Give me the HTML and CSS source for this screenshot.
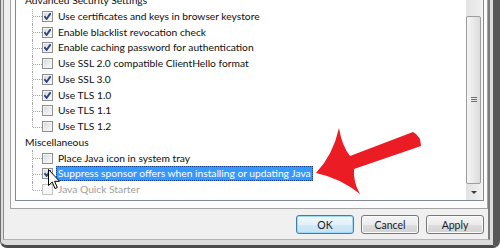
FILE: index.html
```html
<!DOCTYPE html>
<html>
<head>
<meta charset="utf-8">
<link rel="stylesheet" href="styles.css">
</head>
<body>
<div class="frame">
  <div class="dialog">
    <div class="tab">
      <div class="list">
        <div class="tree">
          <div class="row header"><span class="label">Advanced Security Settings</span></div>
          <div class="children">
            <div class="row item"><span class="cb on"></span><span class="label">Use certificates and keys in browser keystore</span></div>
            <div class="row item"><span class="cb on"></span><span class="label">Enable blacklist revocation check</span></div>
            <div class="row item"><span class="cb on"></span><span class="label">Enable caching password for authentication</span></div>
            <div class="row item"><span class="cb"></span><span class="label">Use SSL 2.0 compatible ClientHello format</span></div>
            <div class="row item"><span class="cb on"></span><span class="label">Use SSL 3.0</span></div>
            <div class="row item"><span class="cb on"></span><span class="label">Use TLS 1.0</span></div>
            <div class="row item"><span class="cb"></span><span class="label">Use TLS 1.1</span></div>
            <div class="row item"><span class="cb"></span><span class="label">Use TLS 1.2</span></div>
          </div>
          <div class="row header"><span class="label">Miscellaneous</span></div>
          <div class="children">
            <div class="row item"><span class="cb"></span><span class="label">Place Java icon in system tray</span></div>
            <div class="row item"><span class="cb on"></span><span class="label selected">Suppress sponsor offers when installing or updating Java</span></div>
            <div class="row item disabled"><span class="cb"></span><span class="label">Java Quick Starter</span></div>
          </div>
        </div>
        <div class="scrollbar">
          <div class="track-top"></div>
          <div class="thumb"><span class="grip"></span></div>
          <div class="arrow-down"><span class="tri"></span></div>
        </div>
      </div>
    </div>
    <div class="buttons">
      <button class="btn default">OK</button>
      <button class="btn">Cancel</button>
      <button class="btn">Apply</button>
    </div>
  </div>
  <svg class="cursor" width="13" height="21" viewBox="0 0 13 21">
    <path d="M0.5,0.5 L0.5,16.5 L4.2,13 L7,19.5 L9.3,18.5 L6.6,12.3 L11.5,12.3 Z" fill="#fff" stroke="#000" stroke-width="1" stroke-linejoin="miter"/>
  </svg>
  <svg class="red-arrow" width="500" height="248" viewBox="0 0 500 248">
    <path d="M316,173 Q333,155 339,128 Q342,146 350,156 L413,132 Q421,136 421,146 L354,169 Q353,182 360,194 Q340,178 316,173 Z" fill="#ec1c24"/>
  </svg>
</div>
</body>
</html>
```
FILE: styles.css
```css
* { box-sizing: border-box; }
html, body { margin: 0; padding: 0; background: #ffffff; }
body { font-family: Lato, "Noto Sans", sans-serif; font-size: 10.25px; color: #0e0e0e; }

.frame {
  position: relative;
  width: 500px;
  height: 248px;
  overflow: hidden;
  background: #dcdcdc;
  border-left: 1px solid #6e6e6e;
  border-right: 7px solid #575757;
  border-bottom: 3px solid #4c4c4c;
  border-radius: 0 0 7px 7px;
  padding: 0 3px 5px 2px;
}

.dialog {
  height: 240px;
  background: #f0f0f0;
  border-left: 1px solid #8c8c8c;
  border-right: 2px solid #7c7c7c;
  border-bottom: 1px solid #b4b4b4;
  padding-left: 6px;
  display: flex;
  flex-direction: column;
}

.tab {
  height: 209px;
  background: #fbfbfb;
  border: 1px solid #a3a3a3;
  border-top: none;
  padding: 0 3px 7px 4px;
}

.list {
  height: 201px;
  background: #ffffff;
  border: 1px solid #858992;
  border-top: none;
  display: flex;
  overflow: hidden;
}

.tree {
  flex: 1;
  margin-top: -7.2px;
}

.row {
  position: relative;
  height: 15.75px;
  display: flex;
  align-items: center;
  white-space: nowrap;
}
.header { padding-left: 9px; }
.header .label { padding: 0; margin-left: 0; }

.item { padding-left: 26px; }
.item::before {
  content: "";
  position: absolute;
  left: 16px;
  top: 0;
  bottom: 0;
  border-left: 1px dotted #a4a4a4;
}
.item:last-child::before { bottom: 50%; }
.item::after {
  content: "";
  position: absolute;
  left: 17px;
  width: 9px;
  top: 50%;
  border-top: 1px dotted #a4a4a4;
}

.cb {
  width: 11px;
  height: 11px;
  flex: none;
  border: 1px solid #8e8f8f;
  background: linear-gradient(135deg, #cfd3d9 0%, #e9eaec 50%, #fbfbfb 100%);
  box-shadow: inset 0 0 0 1px #f4f4f4;
  position: relative;
}
.cb.on {
  background-image: url("data:image/svg+xml;utf8,<svg xmlns='http://www.w3.org/2000/svg' width='9' height='9' viewBox='0 0 9 9'><path d='M1.4,4.2 L3.6,7 L7.7,1.1' fill='none' stroke='%232f4480' stroke-width='1.9'/></svg>"), linear-gradient(135deg, #cfd3d9 0%, #e9eaec 50%, #fbfbfb 100%);
  background-repeat: no-repeat;
  background-position: center;
}
.disabled .cb { border-color: #c6c6c6; background: #f6f6f6; box-shadow: none; }
.disabled .label { color: #9d9d9d; }

.label {
  margin-left: 3px;
  padding: 0 2px;
  line-height: 15px;
  height: 15px;
}
.label.selected {
  background: #3399ff;
  color: #ffffff;
  outline: 1px dotted #0f3d87;
  outline-offset: -1px;
}

.scrollbar {
  width: 17px;
  flex: none;
  display: flex;
  flex-direction: column;
  background: linear-gradient(to right, #e2e2e2, #eeeeee 80%, #f6f6f6);
}
.track-top { height: 16px; }
.thumb {
  height: 168px;
  margin: 0 2px 0 0;
  border: 1px solid #9d9d9d;
  border-radius: 2px;
  background: linear-gradient(to right, #f5f5f5, #ebebeb 45%, #dcdcdc);
  display: flex;
  align-items: center;
  justify-content: center;
}
.grip {
  width: 6px;
  height: 6px;
  background: repeating-linear-gradient(to bottom, #6e6e6e 0, #6e6e6e 1px, transparent 1px, transparent 2px);
}
.arrow-down {
  flex: 1;
  display: flex;
  align-items: center;
  justify-content: center;
}
.tri {
  width: 0;
  height: 0;
  border-left: 3px solid transparent;
  border-right: 3px solid transparent;
  border-top: 3px solid #3a3a3a;
  margin-right: 1px;
}

.buttons {
  display: flex;
  justify-content: flex-end;
  gap: 7px;
  padding: 6px 4px 0 0;
}
.btn {
  width: 58px;
  height: 19px;
  padding: 0;
  font-family: Lato, "Noto Sans", sans-serif;
  font-size: 10.5px;
  color: #1a1a1a;
  border: 1px solid #777777;
  border-radius: 3px;
  background: linear-gradient(to bottom, #f4f4f4 0%, #ececec 50%, #dedede 51%, #d2d2d2 100%);
  box-shadow: inset 0 0 0 1px #fbfbfb;
}
.btn.default {
  border-color: #3c7fb1;
  background: linear-gradient(to bottom, #f1f8fc 0%, #e3f1fa 50%, #d2e9f7 51%, #c4e2f5 100%);
  box-shadow: inset 0 0 0 1px #9fd9f6;
}

.cursor {
  position: absolute;
  left: 47px;
  top: 169px;
}
.red-arrow {
  position: absolute;
  left: -1px;
  top: 0;
  pointer-events: none;
}
```
